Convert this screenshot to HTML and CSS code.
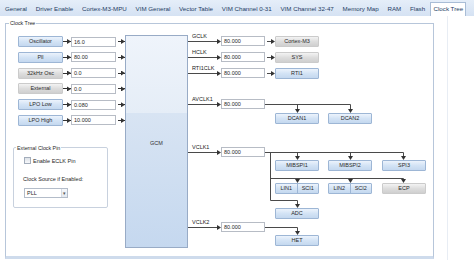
FILE: index.html
```html
<!DOCTYPE html>
<html lang="en">
<head>
    <meta charset="UTF-8">
    <meta name="viewport" content="width=device-width, initial-scale=1.0">
    <title>Clock Tree</title>
    <link rel="stylesheet" href="styles.css">
</head>
<body>
    <div class="tabs">
        <span class="tab">General</span>
        <span class="tab">Driver Enable</span>
        <span class="tab">Cortex-M3-MPU</span>
        <span class="tab">VIM General</span>
        <span class="tab">Vector Table</span>
        <span class="tab">VIM Channel 0-31</span>
        <span class="tab">VIM Channel 32-47</span>
        <span class="tab">Memory Map</span>
        <span class="tab">RAM</span>
        <span class="tab">Flash</span>
        <span class="tab active">Clock Tree</span>
    </div>

    <div class="page">
        <fieldset class="group">
            <legend>Clock Tree</legend>
            <div class="group-body">
                <div class="sources">
                    <div class="src-list">
                        <div class="src-row"><span class="btn">Oscillator</span><i class="arr"></i><span class="field">16.0</span><i class="arr out"></i></div>
                        <div class="src-row"><span class="btn">Pll</span><i class="arr"></i><span class="field">80.00</span><i class="arr out"></i></div>
                        <div class="src-row"><span class="btn gray">32kHz Osc</span><i class="arr"></i><span class="field">0.0</span><i class="arr out"></i></div>
                        <div class="src-row"><span class="btn gray">External</span><i class="arr"></i><span class="field">0.0</span><i class="arr out"></i></div>
                        <div class="src-row"><span class="btn">LPO Low</span><i class="arr"></i><span class="field">0.080</span><i class="arr out"></i></div>
                        <div class="src-row"><span class="btn">LPO High</span><i class="arr"></i><span class="field">10.000</span><i class="arr out"></i></div>
                    </div>

                    <fieldset class="pin-box">
                        <legend>External Clock Pin</legend>
                        <label class="check"><span class="check-box"></span>Enable ECLK Pin</label>
                        <div class="src-label">Clock Source if Enabled:</div>
                        <div class="select"><span class="select-text">PLL</span><span class="drop">&#9662;</span></div>
                    </fieldset>
                </div>

                <div class="gcm">GCM</div>

                <div class="tree">
                    <svg class="wires" width="246" height="232" viewBox="0 0 246 232">
                        <g fill="none" stroke="#4a4a4a" stroke-width="1">
                            <path d="M0 15.5H30M79 15.5H84"/>
                            <path d="M0 31.5H30M79 31.5H84"/>
                            <path d="M0 47.5H30M79 47.5H84"/>
                            <path d="M0 78.5H30M77 78.5H162.5M109.5 78.5V84M162.5 78.5V84"/>
                            <path d="M0 126.5H30M77 126.5H215.5M109.5 126.5V131M162.5 126.5V131M215.5 126.5V131"/>
                            <path d="M82.5 126.5V174.5M82.5 152.5H215.5M109.5 152.5V154M162.5 152.5V154M215.5 152.5V154"/>
                            <path d="M82.5 174.5H109.5V179"/>
                            <path d="M0 201.5H30M77 201.5H109.5V206"/>
                        </g>
                        <g fill="#333">
                            <polygon points="33,15.5 29,13 29,18"/>
                            <polygon points="87,15.5 83,13 83,18"/>
                            <polygon points="33,31.5 29,29 29,34"/>
                            <polygon points="87,31.5 83,29 83,34"/>
                            <polygon points="33,47.5 29,45 29,50"/>
                            <polygon points="87,47.5 83,45 83,50"/>
                            <polygon points="33,78.5 29,76 29,81"/>
                            <polygon points="109.5,87 107,83 112,83"/>
                            <polygon points="162.5,87 160,83 165,83"/>
                            <polygon points="33,126.5 29,124 29,129"/>
                            <polygon points="109.5,134 107,130 112,130"/>
                            <polygon points="162.5,134 160,130 165,130"/>
                            <polygon points="215.5,134 213,130 218,130"/>
                            <polygon points="109.5,157 107,153 112,153"/>
                            <polygon points="162.5,157 160,153 165,153"/>
                            <polygon points="215.5,157 213,153 218,153"/>
                            <polygon points="109.5,182 107,178 112,178"/>
                            <polygon points="33,201.5 29,199 29,204"/>
                            <polygon points="109.5,209 107,205 112,205"/>
                        </g>
                    </svg>

                    <span class="lbl r1">GCLK</span>
                    <span class="in r1">80.000</span>
                    <span class="blk gray c1 r1">Cortex-M3</span>

                    <span class="lbl r2">HCLK</span>
                    <span class="in r2">80.000</span>
                    <span class="blk gray c1 r2">SYS</span>

                    <span class="lbl r3">RTI1CLK</span>
                    <span class="in r3">80.000</span>
                    <span class="blk c1 r3">RTI1</span>

                    <span class="lbl r4">AVCLK1</span>
                    <span class="in r4">80.000</span>
                    <span class="blk c1 r5">DCAN1</span>
                    <span class="blk c2 r5">DCAN2</span>

                    <span class="lbl r6">VCLK1</span>
                    <span class="in r6">80.000</span>
                    <span class="blk c1 r7">MIBSPI1</span>
                    <span class="blk c2 r7">MIBSPI2</span>
                    <span class="blk c3 r7">SPI3</span>

                    <span class="blk split c1 r8"><span>LIN1</span><span>SCI1</span></span>
                    <span class="blk split c2 r8"><span>LIN2</span><span>SCI2</span></span>
                    <span class="blk gray c3 r8">ECP</span>

                    <span class="blk c1 r9">ADC</span>

                    <span class="lbl r10">VCLK2</span>
                    <span class="in r10">80.000</span>
                    <span class="blk c1 r11">HET</span>
                </div>
            </div>
        </fieldset>
    </div>
</body>
</html>
```

FILE: styles.css
```css
/* Global Styles */
* {
    box-sizing: border-box;
}

body {
    margin: 0;
    width: 474px;
    height: 260px;
    overflow: hidden;
    font-family: "Liberation Sans", Arial, sans-serif;
    color: #1f1f1f;
    background-color: #fff;
}

/* Tab strip */
.tabs {
    display: flex;
    height: 16px;
    padding: 2px 0 0 0.6px;
    background: linear-gradient(#e5eef9, #d5e2f3);
}

.tab {
    padding: 0 4.4px;
    font-size: 6.2px;
    line-height: 13px;
    color: #1e3c64;
    white-space: nowrap;
}

.tab.active {
    padding: 0 2px 0 3px;
    background-color: #fff;
    border: 1px solid #a9bdd6;
    border-bottom: none;
    line-height: 12px;
    height: 14px;
}

/* Tab page */
.page {
    width: 448px;
    height: 244px;
    padding: 4px 0 0 5px;
    border-right: 1px solid #e8edf4;
}

.group {
    width: 429px;
    margin: 0;
    padding: 0;
    min-width: 0;
    border: 1px solid #b7c6da;
    border-bottom: 3px solid #cedbec;
}

.group > legend {
    margin-left: 3px;
    padding: 0 1px;
    font-size: 5.3px;
    line-height: 6px;
}

.group-body {
    display: flex;
    height: 230px;
}

/* Clock sources */
.sources {
    width: 119px;
    padding: 10px 0 0 7px;
}

.src-list {
    display: flex;
    flex-direction: column;
    gap: 4.8px;
    margin-left: 5px;
}

.src-row {
    display: flex;
    align-items: center;
    height: 11px;
}

.btn {
    width: 45px;
    height: 11px;
    font-size: 5.5px;
    line-height: 9px;
    text-align: center;
    color: #2b2b2b;
    border: 1px solid #9db6d5;
    border-radius: 1px;
    background: linear-gradient(#ecf3fc, #d3e3f5 50%, #c4d8ef);
}

.btn.gray {
    border-color: #cbcbcb;
    background: linear-gradient(#f3f3f3, #dddddd 50%, #cfcfcf);
}

.field {
    width: 45px;
    height: 10px;
    padding-left: 2px;
    font-size: 5.5px;
    line-height: 8px;
    border: 1px solid #b7bcc5;
    background-color: #fff;
}

.arr {
    position: relative;
    width: 8px;
    height: 1px;
    background-color: #333;
}

.arr::after {
    content: '';
    position: absolute;
    right: 0;
    top: -2px;
    width: 4px;
    height: 5px;
    background-color: #333;
    clip-path: polygon(0 0, 100% 50%, 0 100%);
}

.arr.out {
    width: 7px;
    margin-left: 2px;
}

/* External clock pin box */
.pin-box {
    width: 95px;
    margin: 19px 0 0 0;
    padding: 6px 0 9px 2px;
    min-width: 0;
    border: 1px solid #c8d1de;
    border-radius: 2px;
    font-size: 5.5px;
}

.pin-box legend {
    padding: 0 1px;
    font-size: 5.3px;
    line-height: 6px;
}

.check {
    display: flex;
    align-items: center;
    height: 8px;
    margin-left: 8px;
    gap: 2px;
}

.check-box {
    width: 7px;
    height: 7px;
    border: 1px solid #a3adbb;
    background: linear-gradient(#dde2e8, #f7f8fa);
}

.src-label {
    margin: 11px 0 0 7px;
    line-height: 6px;
}

.select {
    display: flex;
    width: 44px;
    height: 10px;
    margin: 6px 0 0 8px;
    border: 1px solid #b3bcc9;
    background-color: #fff;
}

.select-text {
    flex: 1;
    padding-left: 2px;
    line-height: 8px;
}

.drop {
    width: 6px;
    font-size: 5px;
    line-height: 8px;
    text-align: center;
    color: #555;
    border-left: 1px solid #d5dbe4;
    background: linear-gradient(#f6f8fb, #e4e9f0);
}

/* GCM block */
.gcm {
    display: flex;
    align-items: center;
    justify-content: center;
    width: 63px;
    height: 213px;
    margin-top: 9px;
    padding-top: 3px;
    font-size: 5.5px;
    color: #333;
    border: 1px solid #98abc6;
    background: linear-gradient(#eff4fb, #e5edf7 36.5%, #d8e4f3 36.6%, #c5d8ef);
}

/* Clock tree diagram */
.tree {
    position: relative;
    width: 245px;
    height: 230px;
    font-size: 5.5px;
}

.wires {
    position: absolute;
    left: 0;
    top: 0;
}

.lbl,
.in,
.blk {
    position: absolute;
}

.lbl {
    left: 4px;
    margin-top: -3px;
    line-height: 6px;
    color: #222;
}

.in {
    left: 33px;
    width: 44px;
    height: 10px;
    padding-left: 2px;
    line-height: 8px;
    border: 1px solid #b7bcc5;
    background-color: #fff;
}

.blk {
    width: 44px;
    height: 11px;
    line-height: 9px;
    text-align: center;
    color: #2b2b2b;
    border: 1px solid #9db6d5;
    border-radius: 1px;
    background: linear-gradient(#ecf3fc, #d3e3f5 50%, #c4d8ef);
}

.blk.gray {
    border-color: #cbcbcb;
    background: linear-gradient(#f3f3f3, #dddddd 50%, #cfcfcf);
}

.blk.split {
    display: flex;
}

.blk.split span {
    flex: 1;
}

.blk.split span + span {
    border-left: 1px solid #9db6d5;
}

.c1 { left: 87px; }
.c2 { left: 140px; }
.c3 { left: 194px; }

.r1 { top: 10px; }
.r2 { top: 26px; }
.r3 { top: 42px; }
.r4 { top: 73px; }
.r5 { top: 87px; }
.r6 { top: 121px; }
.r7 { top: 134px; }
.r8 { top: 157px; }
.r9 { top: 182px; }
.r10 { top: 196px; }
.r11 { top: 209px; }
```
